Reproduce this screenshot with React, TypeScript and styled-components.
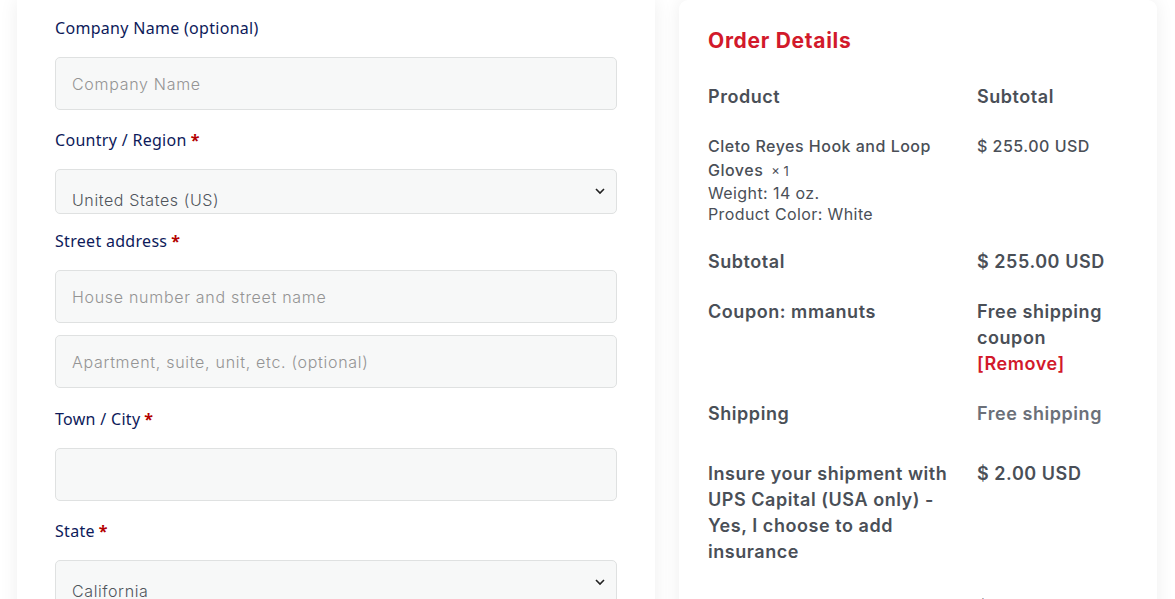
import React from "react";
import styled, { createGlobalStyle } from "styled-components";

const GlobalStyle = createGlobalStyle`
    * {
        box-sizing: border-box;
    }
    body {
        margin: 0;
        background: #ffffff;
        font-family: "Inter", "Liberation Sans", sans-serif;
        overflow: hidden;
    }
`;

const Page = styled.div`
    display: flex;
    align-items: flex-start;
    gap: 24px;
    padding-left: 17px;
    height: 599px;
    overflow: hidden;
`;

const FormCard = styled.div`
    width: 638px;
    height: 640px;
    background: #ffffff;
    box-shadow: 0 0 18px rgba(0, 0, 0, 0.07);
    padding: 16px 38px 0 38px;
`;

const Field = styled.div<{ $gap?: number }>`
    margin-bottom: ${(p) => p.$gap ?? 18}px;
`;

const Label = styled.div`
    font-family: "Noto Sans", "Liberation Sans", sans-serif;
    font-size: 16px;
    letter-spacing: 0.3px;
    line-height: 24px;
    color: #0d1a5a;
    margin-bottom: 17px;
`;

const Required = styled.span`
    color: #b40000;
    font-weight: 700;
    margin-left: 4px;
`;

const Input = styled.div<{ $mb?: number }>`
    height: 53px;
    background: #f7f8f8;
    border: 1px solid #dfe1e1;
    border-radius: 5px;
    padding: 0 16px;
    display: flex;
    align-items: center;
    font-size: 16px;
    letter-spacing: 0.7px;
    font-weight: 300;
    color: #949494;
    margin-bottom: ${(p) => p.$mb ?? 0}px;
`;

const SelectBox = styled.div`
    position: relative;
    height: 45px;
    margin-top: 1px;
    background: #f7f8f8;
    border: 1px solid #dfe1e1;
    border-radius: 5px;
    padding: 19px 16px 0 16px;
    font-size: 16px;
    letter-spacing: 0.6px;
    font-weight: 300;
    line-height: 22px;
    color: #50555c;
    overflow: hidden;
`;

const Chevron = styled.svg`
    position: absolute;
    right: 11px;
    top: 18px;
    width: 10px;
    height: 7px;
`;

const OrderCard = styled.div`
    width: 478px;
    height: 640px;
    background: #ffffff;
    border-radius: 9px 9px 0 0;
    box-shadow: 0 0 18px rgba(0, 0, 0, 0.07);
    padding: 28px 29px 0 29px;
    color: #4a4f57;
`;

const Title = styled.h2`
    margin: 0 0 18px 0;
    font-size: 21px;
    letter-spacing: 0.7px;
    line-height: 26px;
    font-weight: 700;
    color: #d2192b;
`;

const Row = styled.div<{ $pb?: number }>`
    display: grid;
    grid-template-columns: 269px 1fr;
    padding: 12px 0 ${(p) => p.$pb ?? 12}px 0;
`;

const Cell = styled.div<{ $muted?: boolean }>`
    font-size: 18px;
    letter-spacing: 0.55px;
    line-height: 26px;
    font-weight: 600;
    color: ${(p) => (p.$muted ? "#6b7079" : "#4a4f57")};
    padding-right: 14px;
`;

const ProductName = styled.div`
    font-size: 16px;
    letter-spacing: 0.5px;
    line-height: 24px;
    font-weight: 500;
`;

const Qty = styled.span`
    font-size: 13px;
    letter-spacing: 0;
    font-weight: 400;
    margin-left: 8px;
`;

const Meta = styled.div`
    font-size: 16px;
    letter-spacing: 0.4px;
    line-height: 21px;
    font-weight: 400;
`;

const Price = styled.div`
    font-size: 16px;
    letter-spacing: 0.5px;
    line-height: 24px;
    font-weight: 500;
`;

const RemoveLink = styled.a`
    color: #d2192b;
    text-decoration: none;
`;

function ChevronDown() {
    return (
        <Chevron viewBox="0 0 10 7">
            <polyline points="1,1 5,5 9,1" fill="none" stroke="#222" strokeWidth="1.6" />
        </Chevron>
    );
}

export default function App() {
    return (
        <>
            <GlobalStyle />
            <Page>
                <FormCard>
                    <Field>
                        <Label>Company Name (optional)</Label>
                        <Input>Company Name</Input>
                    </Field>
                    <Field $gap={15}>
                        <Label>
                            Country / Region<Required>*</Required>
                        </Label>
                        <SelectBox>
                            United States (US)
                            <ChevronDown />
                        </SelectBox>
                    </Field>
                    <Field $gap={19}>
                        <Label>
                            Street address<Required>*</Required>
                        </Label>
                        <Input $mb={12}>House number and street name</Input>
                        <Input>Apartment, suite, unit, etc. (optional)</Input>
                    </Field>
                    <Field>
                        <Label>
                            Town / City<Required>*</Required>
                        </Label>
                        <Input />
                    </Field>
                    <Field>
                        <Label>
                            State<Required>*</Required>
                        </Label>
                        <SelectBox>
                            California
                            <ChevronDown />
                        </SelectBox>
                    </Field>
                </FormCard>

                <OrderCard>
                    <Title>Order Details</Title>
                    <Row>
                        <Cell>Product</Cell>
                        <Cell>Subtotal</Cell>
                    </Row>
                    <Row>
                        <Cell>
                            <ProductName>
                                Cleto Reyes Hook and Loop Gloves<Qty>× 1</Qty>
                            </ProductName>
                            <Meta>Weight: 14 oz.</Meta>
                            <Meta>Product Color: White</Meta>
                        </Cell>
                        <Cell>
                            <Price>$ 255.00 USD</Price>
                        </Cell>
                    </Row>
                    <Row>
                        <Cell>Subtotal</Cell>
                        <Cell>$ 255.00 USD</Cell>
                    </Row>
                    <Row>
                        <Cell>Coupon: mmanuts</Cell>
                        <Cell>
                            Free shipping coupon <RemoveLink href="#">[Remove]</RemoveLink>
                        </Cell>
                    </Row>
                    <Row $pb={22}>
                        <Cell>Shipping</Cell>
                        <Cell $muted>Free shipping</Cell>
                    </Row>
                    <Row $pb={18}>
                        <Cell>Insure your shipment with UPS Capital (USA only) - Yes, I choose to add insurance</Cell>
                        <Cell>$ 2.00 USD</Cell>
                    </Row>
                    <Row>
                        <Cell>Total</Cell>
                        <Cell>$ 19.70 USD</Cell>
                    </Row>
                </OrderCard>
            </Page>
        </>
    );
}
